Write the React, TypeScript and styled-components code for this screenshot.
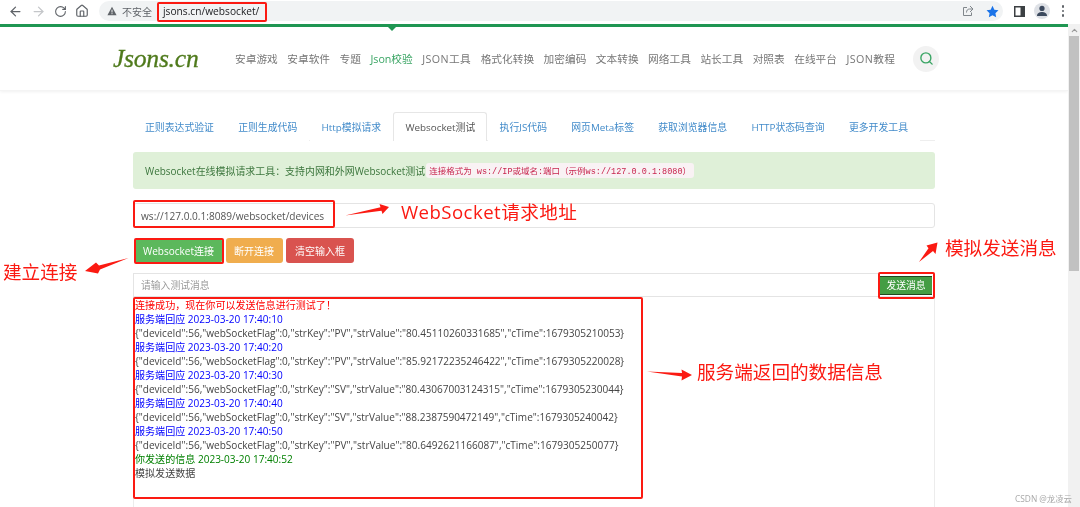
import React from "react";
import styled, { createGlobalStyle } from "styled-components";
import { ArrowLeft, ArrowRight, ChevronUp, Home, RotateCw, Search } from "lucide-react";

const sans = `"Open Sans", "Noto Sans CJK SC", sans-serif`;

const GlobalStyle = createGlobalStyle`
  html, body {
    margin: 0;
    padding: 0;
    background: #fff;
    overflow: hidden;
  }
  * {
    box-sizing: border-box;
  }
`;

const navItems = [
  "安卓游戏",
  "安卓软件",
  "专题",
  "Json校验",
  "JSON工具",
  "格式化转换",
  "加密编码",
  "文本转换",
  "网络工具",
  "站长工具",
  "对照表",
  "在线平台",
  "JSON教程",
];

const tabs = [
  "正则表达式验证",
  "正则生成代码",
  "Http模拟请求",
  "Websocket测试",
  "执行JS代码",
  "网页Meta标签",
  "获取浏览器信息",
  "HTTP状态码查询",
  "更多开发工具",
];

const logLines: { kind: "ok" | "server" | "data" | "sent"; text: string }[] = [
  { kind: "ok", text: "连接成功，现在你可以发送信息进行测试了！" },
  { kind: "server", text: "服务端回应 2023-03-20 17:40:10" },
  { kind: "data", text: `{"deviceId":56,"webSocketFlag":0,"strKey":"PV","strValue":"80.45110260331685","cTime":1679305210053}` },
  { kind: "server", text: "服务端回应 2023-03-20 17:40:20" },
  { kind: "data", text: `{"deviceId":56,"webSocketFlag":0,"strKey":"PV","strValue":"85.92172235246422","cTime":1679305220028}` },
  { kind: "server", text: "服务端回应 2023-03-20 17:40:30" },
  { kind: "data", text: `{"deviceId":56,"webSocketFlag":0,"strKey":"SV","strValue":"80.43067003124315","cTime":1679305230044}` },
  { kind: "server", text: "服务端回应 2023-03-20 17:40:40" },
  { kind: "data", text: `{"deviceId":56,"webSocketFlag":0,"strKey":"SV","strValue":"88.2387590472149","cTime":1679305240042}` },
  { kind: "server", text: "服务端回应 2023-03-20 17:40:50" },
  { kind: "data", text: `{"deviceId":56,"webSocketFlag":0,"strKey":"PV","strValue":"80.6492621166087","cTime":1679305250077}` },
  { kind: "sent", text: "你发送的信息 2023-03-20 17:40:52" },
  { kind: "data", text: "模拟发送数据" },
];

const logColors = { ok: "#ff0000", server: "#0000ff", data: "#444", sent: "#008000" };

export default function App() {
  return (
    <Screen>
      <GlobalStyle />
      <Toolbar>
        <ToolIcons>
          <ArrowLeft size={15} color="#5f6368" strokeWidth={2} />
          <ArrowRight size={15} color="#c4c6c9" strokeWidth={2} />
          <RotateCw size={13} color="#5f6368" strokeWidth={2} />
          <Home size={14} color="#5f6368" strokeWidth={2} />
        </ToolIcons>
        <Omnibox>
          <WarnIcon viewBox="0 0 12 12">
            <path d="M6 1 L11.5 11 H0.5 Z" fill="#5f6368" />
            <rect x="5.4" y="4.4" width="1.2" height="3.4" fill="#f1f3f4" />
            <rect x="5.4" y="8.6" width="1.2" height="1.2" fill="#f1f3f4" />
          </WarnIcon>
          <Insecure>不安全</Insecure>
          <Url>jsons.cn/websocket/</Url>
          <OmniboxEnd>
            <svg width="12" height="12" viewBox="0 0 12 12" fill="none" stroke="#80868b" strokeWidth="1">
              <path d="M8 1 L11 4 L8 7 M11 4 H7.5 C5.5 4 4.5 5.5 4.5 7.5" />
              <path d="M5 2.5 H1.5 V10.5 H9.5 V7.5" />
            </svg>
            <svg width="13" height="13" viewBox="0 0 24 24" fill="#1a73e8">
              <path d="M12 1.5 L15.4 8.6 L23 9.6 L17.4 15 L18.8 22.6 L12 18.9 L5.2 22.6 L6.6 15 L1 9.6 L8.6 8.6 Z" />
            </svg>
          </OmniboxEnd>
        </Omnibox>
        <ToolEnd>
          <svg width="11" height="11" viewBox="0 0 11 11">
            <path fillRule="evenodd" d="M0 0 H11 V11 H0 Z M1.5 1.5 V9.5 H6.5 V1.5 Z" fill="#3c4043" />
          </svg>
          <Avatar>
            <svg width="12" height="12" viewBox="0 0 12 12" fill="#3c4a5e">
              <circle cx="6" cy="3.4" r="2.6" />
              <path d="M1 11 C1 8 3.5 7 6 7 C8.5 7 11 8 11 11 Z" />
            </svg>
          </Avatar>
          <Dots>
            <i />
            <i />
            <i />
          </Dots>
        </ToolEnd>
      </Toolbar>
      <Viewport>
        <Main>
          <TopLine>
            <Caret />
          </TopLine>
          <Nav>
            <Logo>Jsons.cn</Logo>
            <NavList>
              {navItems.map((item) => (
                <NavItem key={item} $active={item === "Json校验"} $wide={item.startsWith("JSON")}>
                  {item}
                </NavItem>
              ))}
            </NavList>
            <SearchButton>
              <Search size={15} color="#3aa564" strokeWidth={2.2} />
            </SearchButton>
          </Nav>
          <Content>
            <Tabs>
              {tabs.map((tab) => (
                <Tab key={tab} $active={tab === "Websocket测试"}>
                  {tab}
                </Tab>
              ))}
            </Tabs>
            <Alert>
              Websocket在线模拟请求工具：支持内网和外网Websocket测试
              <Code>连接格式为 ws://IP或域名:端口（示例ws://127.0.0.1:8080）</Code>
            </Alert>
            <UrlField>ws://127.0.0.1:8089/websocket/devices</UrlField>
            <Buttons>
              <Button $bg="#5cb85c" $w={87}>Websocket连接</Button>
              <Button $bg="#f0ad4e" $w={57}>断开连接</Button>
              <Button $bg="#d9534f" $w={68}>清空输入框</Button>
            </Buttons>
            <SendRow>
              <Placeholder>请输入测试消息</Placeholder>
              <SendButton>发送消息</SendButton>
            </SendRow>
            <LogBox>
              {logLines.map((line, i) => (
                <LogLine key={i} $kind={line.kind}>
                  {line.text}
                </LogLine>
              ))}
            </LogBox>
          </Content>
        </Main>
        <Scrollbar>
          <ScrollArrow>
            <ChevronUp size={9} color="#9a9a9a" strokeWidth={3} />
          </ScrollArrow>
          <ScrollThumb />
        </Scrollbar>
      </Viewport>

      <Highlight $x={157} $y={2} $w={110} $h={20} />
      <Highlight $x={133} $y={200} $w={202} $h={28} />
      <Highlight $x={134} $y={238} $w={90} $h={26} />
      <Highlight $x={878} $y={272} $w={57} $h={27} />
      <Highlight $x={133} $y={297} $w={510} $h={202} />

      <Arrow $x={345} $y={204} width="44" height="13" viewBox="0 0 44 13">
        <path d="M0 11.5 L35.5 3.2 L34.5 0 L44 3 L37.5 10 L36.5 6.8 Z" />
      </Arrow>
      <Arrow $x={84} $y={257} width="45" height="17" viewBox="0 0 45 17">
        <path d="M44.5 1 L15 8.5 L12 5.5 L1 14 L14 16.5 L16 12.5 Z" />
      </Arrow>
      <Arrow $x={919} $y={240} width="20" height="23" viewBox="0 0 20 23">
        <path d="M0 22 L9.5 8.2 L7.5 5.5 L18.5 2.5 L16.5 14 L14 11 Z" />
      </Arrow>
      <Arrow $x={646} $y={367} width="47" height="15" viewBox="0 0 47 15">
        <path d="M1 4.5 L36 6 L35.5 2.5 L46 8 L35.5 13.5 L36 9.5 Z" />
      </Arrow>

      <Note $x={401} $y={199} $spacing={0.45}>WebSocket请求地址</Note>
      <Note $x={3} $y={259}>建立连接</Note>
      <Note $x={945} $y={235}>模拟发送消息</Note>
      <Note $x={697} $y={359}>服务端返回的数据信息</Note>
      <Watermark>CSDN @龙凌云</Watermark>
    </Screen>
  );
}

const Screen = styled.div`
  position: relative;
  width: 1080px;
  height: 507px;
  overflow: hidden;
  font-family: ${sans};
  background: #fff;
  filter: blur(0.3px);
`;

const Toolbar = styled.div`
  display: flex;
  align-items: center;
  height: 24px;
  padding: 0 0 2px 8px;
`;

const ToolIcons = styled.div`
  display: flex;
  align-items: center;
  gap: 8px;
  width: 91px;
`;

const Omnibox = styled.div`
  display: flex;
  align-items: center;
  width: 904px;
  height: 20px;
  padding: 0 0 0 8px;
  background: #f1f3f4;
  border-radius: 10px;
`;

const WarnIcon = styled.svg`
  width: 10px;
  height: 10px;
  flex: none;
`;

const Insecure = styled.span`
  margin-left: 5px;
  font-size: 10px;
  color: #5f6368;
`;

const Url = styled.span`
  margin-left: 11px;
  font-size: 10.2px;
  color: #202124;
`;

const OmniboxEnd = styled.div`
  display: flex;
  align-items: center;
  gap: 11.5px;
  margin-left: auto;
  padding-right: 4.5px;
`;

const ToolEnd = styled.div`
  display: flex;
  align-items: center;
  margin-left: 10.5px;
  gap: 9.5px;
`;

const Avatar = styled.div`
  display: flex;
  align-items: center;
  justify-content: center;
  width: 16px;
  height: 16px;
  border-radius: 50%;
  background: #dee1e6;
`;

const Dots = styled.div`
  display: flex;
  flex-direction: column;
  gap: 2px;
  margin-left: 2px;
  & i {
    display: block;
    width: 2.4px;
    height: 2.4px;
    border-radius: 50%;
    background: #5f6368;
  }
`;

const Viewport = styled.div`
  display: flex;
  height: 483px;
`;

const Main = styled.div`
  flex: 1;
  min-width: 0;
`;

const TopLine = styled.div`
  position: relative;
  height: 3px;
  background: #1f9652;
`;

const Caret = styled.span`
  position: absolute;
  left: 388px;
  top: 3px;
  border-left: 4px solid transparent;
  border-right: 4px solid transparent;
  border-top: 4px solid #1f9652;
`;

const Nav = styled.div`
  display: flex;
  align-items: center;
  height: 64px;
  padding-left: 113px;
  border-bottom: 1px solid #f4f4f4;
  box-shadow: 0 1px 3px rgba(0, 0, 0, 0.06);
`;

const Logo = styled.div`
  width: 122px;
  font-family: "Liberation Serif", serif;
  font-style: italic;
  font-size: 25.6px;
  letter-spacing: -0.25px;
  -webkit-text-stroke: 0.3px #4f7a1c;
  color: #4f7a1c;
`;

const NavList = styled.div`
  display: flex;
  gap: 9.5px;
`;

const NavItem = styled.span<{ $active?: boolean; $wide?: boolean }>`
  font-size: 10.7px;
  letter-spacing: ${({ $wide }) => ($wide ? "0.4px" : "0")};
  color: ${({ $active }) => ($active ? "#3aa564" : "#777")};
`;

const SearchButton = styled.div`
  display: flex;
  align-items: center;
  justify-content: center;
  width: 26px;
  height: 26px;
  margin-left: 18px;
  border-radius: 50%;
  background: #f2f2f2;
`;

const Content = styled.div`
  width: 802px;
  margin-left: 133px;
  padding-top: 21px;
`;

const Tabs = styled.div`
  display: flex;
  gap: 0.25px;
  height: 29px;
  border-bottom: 1px solid #eee;
`;

const Tab = styled.div<{ $active?: boolean }>`
  display: flex;
  align-items: center;
  height: 29px;
  padding: 0 11px;
  white-space: nowrap;
  font-size: 9.85px;
  color: ${({ $active }) => ($active ? "#555" : "#428bca")};
  background: #fff;
  border: 1px solid ${({ $active }) => ($active ? "#e6e6e6" : "transparent")};
  border-bottom: 0;
  border-radius: 3px 3px 0 0;
`;

const Alert = styled.div`
  display: flex;
  align-items: center;
  height: 37px;
  margin-top: 11px;
  padding-left: 12px;
  font-size: 9.95px;
  white-space: nowrap;
  color: #3c763d;
  background: #dff0d8;
  border-radius: 3px;
`;

const Code = styled.code`
  margin-left: 1px;
  padding: 1px 3px;
  font-family: "Liberation Mono", "Noto Sans CJK SC", monospace;
  font-size: 8.5px;
  color: #c7254e;
  background: #f9f2f4;
  border-radius: 3px;
`;

const UrlField = styled.div`
  display: flex;
  align-items: center;
  height: 25px;
  margin-top: 14px;
  padding-left: 7px;
  font-size: 10.1px;
  color: #555;
  border: 1px solid #e4e4e4;
  border-radius: 3px;
`;

const Buttons = styled.div`
  display: flex;
  gap: 3.5px;
  height: 25px;
  margin: 10px 0 10px 2px;
`;

const Button = styled.div<{ $bg: string; $w: number }>`
  display: flex;
  align-items: center;
  justify-content: center;
  width: ${({ $w }) => $w}px;
  font-size: 10px;
  color: #fff;
  background: ${({ $bg }) => $bg};
  border-radius: 3px;
`;

const SendRow = styled.div`
  display: flex;
  align-items: center;
  justify-content: space-between;
  height: 24px;
  padding: 0 2px 0 7px;
  border: 1px solid #e4e4e4;
`;

const Placeholder = styled.span`
  font-size: 9.8px;
  color: #999;
`;

const SendButton = styled.div`
  display: flex;
  align-items: center;
  justify-content: center;
  width: 52px;
  height: 19px;
  font-size: 9.8px;
  color: #fff;
  background: #449d44;
  border-top: 1px solid #1f4a1f;
  border-bottom: 1px solid #1f4a1f;
`;

const LogBox = styled.div`
  height: 240px;
  padding: 1px 0 0 1px;
  border: 1px solid #ececec;
  border-top: 0;
`;

const LogLine = styled.div<{ $kind: keyof typeof logColors }>`
  height: 14px;
  line-height: 14px;
  font-size: 10.06px;
  white-space: nowrap;
  color: ${({ $kind }) => logColors[$kind]};
`;

const Scrollbar = styled.div`
  width: 12px;
  background: #f1f1f1;
`;

const ScrollArrow = styled.div`
  display: flex;
  align-items: center;
  justify-content: center;
  height: 12px;
`;

const ScrollThumb = styled.div`
  height: 235px;
  margin: 0 1px;
  background: #c1c1c1;
`;

const Highlight = styled.div<{ $x: number; $y: number; $w: number; $h: number }>`
  position: absolute;
  left: ${({ $x }) => $x}px;
  top: ${({ $y }) => $y}px;
  width: ${({ $w }) => $w}px;
  height: ${({ $h }) => $h}px;
  border: 2px solid #fb1a12;
  border-radius: 2px;
`;

const Arrow = styled.svg<{ $x: number; $y: number }>`
  position: absolute;
  left: ${({ $x }) => $x}px;
  top: ${({ $y }) => $y}px;
  fill: #fb1a12;
`;

const Note = styled.div<{ $x: number; $y: number; $spacing?: number }>`
  position: absolute;
  left: ${({ $x }) => $x}px;
  top: ${({ $y }) => $y}px;
  font-size: 18.6px;
  line-height: 26px;
  letter-spacing: ${({ $spacing }) => $spacing ?? 0}px;
  white-space: nowrap;
  color: #fb1a12;
`;

const Watermark = styled.div`
  position: absolute;
  right: 8px;
  top: 492px;
  font-size: 8.4px;
  color: #a8a8a8;
`;
